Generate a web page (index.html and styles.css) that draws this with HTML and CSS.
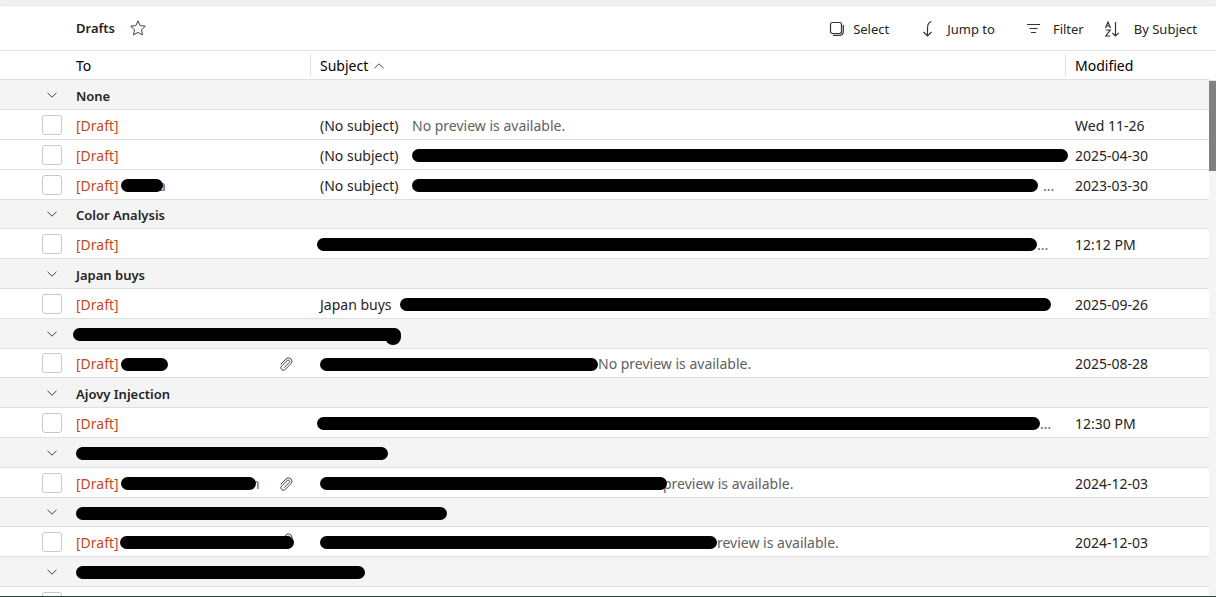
FILE: index.html
```html
<!DOCTYPE html>
<html lang="en">
<head>
  <meta charset="UTF-8">
  <title>Drafts</title>
  <link rel="stylesheet" href="styles.css">
</head>
<body>
  <svg class="symbols" aria-hidden="true">
    <symbol id="chevron" viewBox="0 0 10 10"><path d="M.5 2.800 5 7.200l4.500-4.400"/></symbol>
    <symbol id="clip" viewBox="0 0 14 14"><path d="M1.500 7.500 7 2a3.300 3.300 0 0 1 5 0 3.300 3.300 0 0 1 0 4.600l-5.800 5.900a2.500 2.500 0 0 1-3.600-3.500l5.600-5.500a1.400 1.400 0 0 1 2 2L5 10.700"/></symbol>
  </svg>

  <main class="panel">
    <header class="toolbar">
      <h1>Drafts</h1>
      <button class="star" aria-label="Add to favorites">
        <svg width="16" height="16" viewBox="0 0 16 16"><path d="M8 .9l2.100 4.700 5.200.6-3.800 3.500 1 5.200L8 12.400l-4.500 2.500 1-5.200L.7 6.200l5.200-.6z"/></svg>
      </button>
      <div class="tools">
        <button class="tool select">
          <svg width="16" height="16" viewBox="0 0 16 16"><rect x="1.500" y="1.500" width="11" height="11" rx="2"/><path d="M14.300 4v6.800a3.500 3.500 0 0 1-3.500 3.500H4"/></svg>
          Select
        </button>
        <button class="tool">
          <svg width="16" height="16" viewBox="0 0 16 16"><path d="M11.500.5C8 1.500 7.500 4 7.500 7v8M3.500 11l4 4 4-4"/></svg>
          Jump to
        </button>
        <button class="tool">
          <svg width="16" height="16" viewBox="0 0 16 16"><path d="M1 3.500h13M3.500 7.500h8M5 11.500h5"/></svg>
          Filter
        </button>
        <button class="tool sort">
          <svg width="16" height="16" viewBox="0 0 16 16"><path d="M1.500 7 4 1l2.500 6M2.300 5h3.400M1.800 9h4.400l-4.400 6h4.600M11.500 1v14M8.300 11.800l3.200 3.200 3.200-3.200"/></svg>
          By Subject
        </button>
      </div>
    </header>

    <div class="list">
      <div class="rows">
      <table>
        <colgroup>
          <col class="col-check">
          <col class="col-to">
          <col class="col-subject">
          <col class="col-modified">
        </colgroup>
        <thead>
          <tr>
            <td></td>
            <th scope="col">To</th>
            <th scope="col" class="divided"><span>Subject <svg class="chevron up" width="10" height="10"><use href="#chevron"/></svg></span></th>
            <th scope="col" class="divided"><span>Modified</span></th>
          </tr>
        </thead>
        <tbody>
          <tr class="group">
            <td><button class="toggle" aria-label="Collapse group"><svg class="chevron" width="10" height="10"><use href="#chevron"/></svg></button></td>
            <th colspan="3">None</th>
          </tr>
          <tr>
            <td><input type="checkbox" aria-label="Select message"></td>
            <td><div class="line"><span class="draft">[Draft]</span></div></td>
            <td><div class="line"><span class="title">(No subject)</span><span class="preview">No preview is available.</span></div></td>
            <td>Wed 11-26</td>
          </tr>
          <tr>
            <td><input type="checkbox" aria-label="Select message"></td>
            <td><div class="line"><span class="draft">[Draft]</span></div></td>
            <td><div class="line"><span class="title">(No subject)</span><span class="bar" style="width: 656px"></span></div></td>
            <td>2025-04-30</td>
          </tr>
          <tr>
            <td><input type="checkbox" aria-label="Select message"></td>
            <td><div class="line"><span class="draft">[Draft]</span><span class="bar" style="width: 42px"></span><span class="tail">a</span></div></td>
            <td><div class="line"><span class="title">(No subject)</span><span class="bar" style="width: 626px"></span><span class="more">...</span></div></td>
            <td>2023-03-30</td>
          </tr>
          <tr class="group">
            <td><button class="toggle" aria-label="Collapse group"><svg class="chevron" width="10" height="10"><use href="#chevron"/></svg></button></td>
            <th colspan="3">Color Analysis</th>
          </tr>
          <tr>
            <td><input type="checkbox" aria-label="Select message"></td>
            <td><div class="line"><span class="draft">[Draft]</span></div></td>
            <td><div class="line"><span class="bar lead" style="width: 720px"></span><span class="preview">...</span></div></td>
            <td>12:12 PM</td>
          </tr>
          <tr class="group">
            <td><button class="toggle" aria-label="Collapse group"><svg class="chevron" width="10" height="10"><use href="#chevron"/></svg></button></td>
            <th colspan="3">Japan buys</th>
          </tr>
          <tr>
            <td><input type="checkbox" aria-label="Select message"></td>
            <td><div class="line"><span class="draft">[Draft]</span></div></td>
            <td><div class="line near"><span>Japan buys</span><span class="bar" style="width: 651px"></span></div></td>
            <td>2025-09-26</td>
          </tr>
          <tr class="group">
            <td><button class="toggle" aria-label="Collapse group"><svg class="chevron" width="10" height="10"><use href="#chevron"/></svg></button></td>
            <th colspan="3"><div class="line"><span class="bar lead blob" style="width: 328px"></span></div></th>
          </tr>
          <tr>
            <td><input type="checkbox" aria-label="Select message"></td>
            <td><div class="line"><span class="draft">[Draft]</span><span class="bar" style="width: 47px"></span><svg class="clip" width="14" height="14"><use href="#clip"/></svg></div></td>
            <td><div class="line"><span class="bar" style="width: 278px"></span><span class="preview">No preview is available.</span></div></td>
            <td>2025-08-28</td>
          </tr>
          <tr class="group">
            <td><button class="toggle" aria-label="Collapse group"><svg class="chevron" width="10" height="10"><use href="#chevron"/></svg></button></td>
            <th colspan="3">Ajovy Injection</th>
          </tr>
          <tr>
            <td><input type="checkbox" aria-label="Select message"></td>
            <td><div class="line"><span class="draft">[Draft]</span></div></td>
            <td><div class="line"><span class="bar lead" style="width: 723px"></span><span class="preview">...</span></div></td>
            <td>12:30 PM</td>
          </tr>
          <tr class="group">
            <td><button class="toggle" aria-label="Collapse group"><svg class="chevron" width="10" height="10"><use href="#chevron"/></svg></button></td>
            <th colspan="3"><div class="line"><span class="bar" style="width: 312px"></span></div></th>
          </tr>
          <tr>
            <td><input type="checkbox" aria-label="Select message"></td>
            <td><div class="line"><span class="draft">[Draft]</span><span class="bar" style="width: 135px"></span><span class="tail">n</span><svg class="clip" width="14" height="14"><use href="#clip"/></svg></div></td>
            <td><div class="line"><span class="bar" style="width: 347px"></span><span class="preview tucked">preview is available.</span></div></td>
            <td>2024-12-03</td>
          </tr>
          <tr class="group">
            <td><button class="toggle" aria-label="Collapse group"><svg class="chevron" width="10" height="10"><use href="#chevron"/></svg></button></td>
            <th colspan="3"><div class="line"><span class="bar" style="width: 371px"></span></div></th>
          </tr>
          <tr>
            <td><input type="checkbox" aria-label="Select message"></td>
            <td><div class="line covered"><span class="draft">[Draft]</span><span class="bar" style="width: 174px"></span><svg class="clip" width="14" height="14"><use href="#clip"/></svg></div></td>
            <td><div class="line"><span class="bar" style="width: 397px"></span><span class="preview">review is available.</span></div></td>
            <td>2024-12-03</td>
          </tr>
          <tr class="group">
            <td><button class="toggle" aria-label="Collapse group"><svg class="chevron" width="10" height="10"><use href="#chevron"/></svg></button></td>
            <th colspan="3"><div class="line"><span class="bar" style="width: 289px"></span></div></th>
          </tr>
          <tr>
            <td><input type="checkbox" aria-label="Select message"></td>
            <td><div class="line"><svg class="clip" width="14" height="14"><use href="#clip"/></svg></div></td>
            <td></td>
            <td></td>
          </tr>
        </tbody>
      </table>
      </div>
      <div class="scrollbar"><div class="thumb"></div></div>
    </div>
  </main>
</body>
</html>
```
FILE: styles.css
```css
* {
  box-sizing: border-box;
}

body {
  margin: 0;
  height: 100vh;
  padding-top: 5px;
  display: flex;
  flex-direction: column;
  overflow: hidden;
  background: #f0f0f0;
  border-bottom: 1px solid #1f4a3d;
  font-family: "Noto Sans", "Open Sans", sans-serif;
  font-size: 13px;
  line-height: 18px;
  color: #242424;
}

button {
  padding: 0;
  border: none;
  background: none;
  font: inherit;
  color: inherit;
  cursor: pointer;
}

svg {
  fill: none;
  stroke: #424242;
  stroke-width: 1;
  flex: none;
}

.symbols {
  position: absolute;
  width: 0;
  height: 0;
}

.panel {
  flex: 1;
  min-height: 0;
  display: flex;
  flex-direction: column;
  overflow: hidden;
  background: #fff;
  border-top: 1px solid #e8e8e8;
  border-radius: 4px 4px 0 0;
}

/* toolbar */
.toolbar {
  flex: none;
  height: 45px;
  padding: 0 19px 0 76px;
  display: flex;
  align-items: center;
  border-bottom: 1px solid #e0e0e0;
}

h1 {
  margin: 0 15px 0 0;
  font-size: 13px;
  font-weight: 600;
}

.star,
.tool {
  display: flex;
  align-items: center;
}

.tools {
  margin-left: auto;
  padding-top: 2px;
  display: flex;
  gap: 31px;
}

.tool {
  gap: 11px;
}

.tool svg {
  stroke: #333;
  stroke-width: 1.2;
}

.select {
  gap: 8px;
}

.sort {
  gap: 14px;
  margin-left: -11px;
}

/* message list */
.list {
  flex: 1;
  min-height: 0;
  display: flex;
  align-items: flex-start;
}

.rows {
  flex: 1;
  min-width: 0;
}

table {
  width: 100%;
  table-layout: fixed;
  border-collapse: separate;
  border-spacing: 0;
  font-size: 14px;
}

.col-check {
  width: 76px;
}

.col-to {
  width: 234px;
}

.col-modified {
  width: 144px;
}

tr {
  height: 30px;
}

tbody tr:nth-child(5n),
thead tr {
  height: 29px;
}

th,
td {
  padding: 2px 0 0;
  border-bottom: 1px solid #e0e0e0;
  text-align: left;
  white-space: nowrap;
}

td:nth-child(n+3) {
  padding-left: 10px;
}

td:first-child {
  padding: 0 0 0 42px;
}

thead th {
  padding: 2px 0 0;
  font-weight: 400;
  color: #000;
}

thead .divided {
  padding: 0;
}

.divided span {
  display: flex;
  align-items: center;
  gap: 6px;
  height: 22px;
  padding: 2px 0 0 9px;
  border-left: 1px solid #e0e0e0;
}

.group {
  background: #f4f4f4;
}

.group th {
  font-size: 13px;
  font-weight: 600;
}

.toggle,
input {
  display: block;
  width: 20px;
  height: 20px;
}

.toggle {
  display: flex;
  align-items: center;
  justify-content: center;
}

.up {
  transform: rotate(180deg);
}

input {
  appearance: none;
  margin: 0;
  background: #fff;
  border: 1px solid #c8c8c8;
  border-radius: 3px;
}

.line {
  height: 18px;
  display: flex;
  align-items: center;
}

.draft {
  width: 45px;
  color: #c4471c;
}

.title {
  flex: none;
  width: 92px;
}

.near {
  gap: 8px;
}

.preview,
.more,
.tail {
  color: #616161;
}

.more {
  margin-left: 5px;
}

.tail {
  margin-left: -5px;
}

.tucked {
  margin-left: -4px;
}

/* marker strokes over private text */
.bar {
  position: relative;
  z-index: 1;
  flex: none;
  height: 13px;
  background: #000;
  border-radius: 7px;
}

.lead {
  margin-left: -3px;
}

.blob::after {
  content: "";
  position: absolute;
  right: 0;
  top: 1px;
  width: 16px;
  height: 16px;
  background: #000;
  border-radius: 8px;
}

.clip {
  margin: 0 17px 0 auto;
}

.covered .clip {
  margin-left: -15px;
  margin-bottom: 6px;
}

.scrollbar {
  flex: none;
  align-self: stretch;
  width: 7px;
  background: #f4f4f4;
}

.scrollbar::before {
  content: "";
  display: block;
  height: 29px;
  background: #fff;
  border-bottom: 1px solid #e0e0e0;
}

.thumb {
  height: 90px;
  background: #808080;
}
```
